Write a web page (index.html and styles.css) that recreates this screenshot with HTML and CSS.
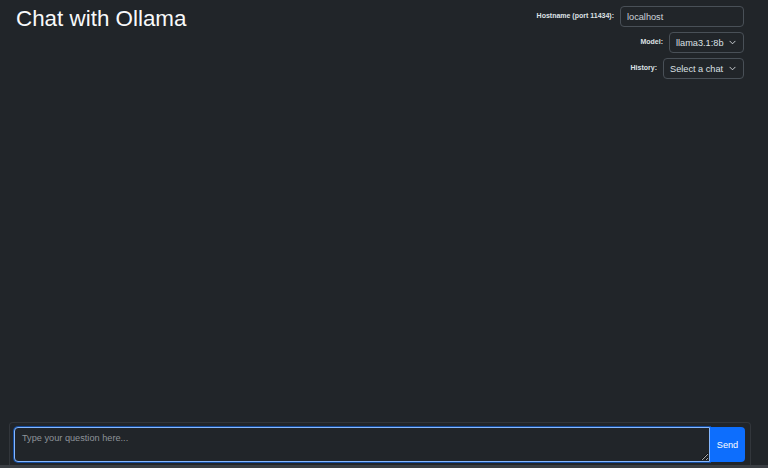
FILE: index.html
```html
<!DOCTYPE html>
<html lang="en">
<head>
<meta charset="utf-8">
<title>Chat with Ollama</title>
<link rel="stylesheet" href="styles.css">
</head>
<body>
<div class="page">
  <header class="top">
    <h1 class="title">Chat with Ollama</h1>
    <div class="settings">
      <div class="row">
        <label class="lbl" for="host">Hostname (port 11434):</label>
        <input id="host" class="field host" type="text" value="localhost">
      </div>
      <div class="row">
        <label class="lbl">Model:</label>
        <div class="field select model">
          <span>llama3.1:8b</span>
          <svg class="chev" viewBox="0 0 16 16" width="7" height="7"><path d="M2 5l6 6 6-6" fill="none" stroke="#dee2e6" stroke-width="2" stroke-linecap="round" stroke-linejoin="round"/></svg>
        </div>
      </div>
      <div class="row">
        <label class="lbl">History:</label>
        <div class="field select history">
          <span>Select a chat</span>
          <svg class="chev" viewBox="0 0 16 16" width="7" height="7"><path d="M2 5l6 6 6-6" fill="none" stroke="#dee2e6" stroke-width="2" stroke-linecap="round" stroke-linejoin="round"/></svg>
        </div>
      </div>
    </div>
  </header>
  <main class="chat"></main>
  <footer class="composer">
    <div class="group">
      <textarea class="question" placeholder="Type your question here..."></textarea>
      <button class="send">Send</button>
    </div>
  </footer>
  <div class="strip"></div>
</div>
</body>
</html>
```
FILE: styles.css
```css
* { box-sizing: border-box; }
html, body {
  margin: 0;
  height: 100%;
  background: #212529;
  color: #dee2e6;
  font-family: "Liberation Sans", Arial, sans-serif;
  overflow: hidden;
}
.page {
  height: 468px;
  display: flex;
  flex-direction: column;
}
.top {
  display: flex;
  justify-content: space-between;
  align-items: flex-start;
  padding: 6px 24px 0 16px;
}
.title {
  margin: 0;
  font-size: 22.4px;
  font-weight: 400;
  line-height: 26px;
  color: #f8f9fa;
}
.settings {
  display: flex;
  flex-direction: column;
  align-items: flex-end;
  gap: 5px;
}
.row {
  display: flex;
  align-items: flex-start;
  gap: 6px;
}
.lbl {
  font-size: 7px;
  font-weight: 700;
  color: #dee2e6;
  padding-top: 5px;
  line-height: 9px;
}
.field {
  height: 21px;
  border: 1px solid #495057;
  border-radius: 4px;
  background: #212529;
  font-family: "Liberation Sans", Arial, sans-serif;
  font-size: 9.2px;
}
.host {
  width: 124px;
  padding: 0 6px;
  color: #ced4da;
  outline: none;
}
.select {
  display: flex;
  align-items: center;
  padding: 0 7px 0 6px;
  color: #dee2e6;
  gap: 5px;
}
.model { width: 75px; }
.history { width: 81px; }
.chev { flex: none; margin-left: auto; }
.chat { flex: 1; }
.composer {
  padding: 0 17px 0 9px;
}
.group {
  display: flex;
  border: 1px solid #32363b;
  border-bottom: none;
  border-radius: 4px 4px 0 0;
  padding: 4px 5px 3px 4px;
}
.question {
  flex: 1;
  height: 35px;
  resize: vertical;
  background: #212529;
  color: #dee2e6;
  border: 1px solid #86b7fe;
  box-shadow: 0 0 0 1px rgba(13, 110, 253, 0.55);
  border-radius: 4px 0 0 4px;
  padding: 5px 7px;
  font-family: "Liberation Sans", Arial, sans-serif;
  font-size: 9.2px;
  outline: none;
}
.question::placeholder { color: #8d9399; }
.send {
  width: 35px;
  height: 35px;
  border: none;
  border-radius: 0 4px 4px 0;
  background: #0d6efd;
  color: #fff;
  font-family: "Liberation Sans", Arial, sans-serif;
  font-size: 9.2px;
  padding: 0;
}
.strip {
  height: 3px;
  background: #3a3e43;
}
```
